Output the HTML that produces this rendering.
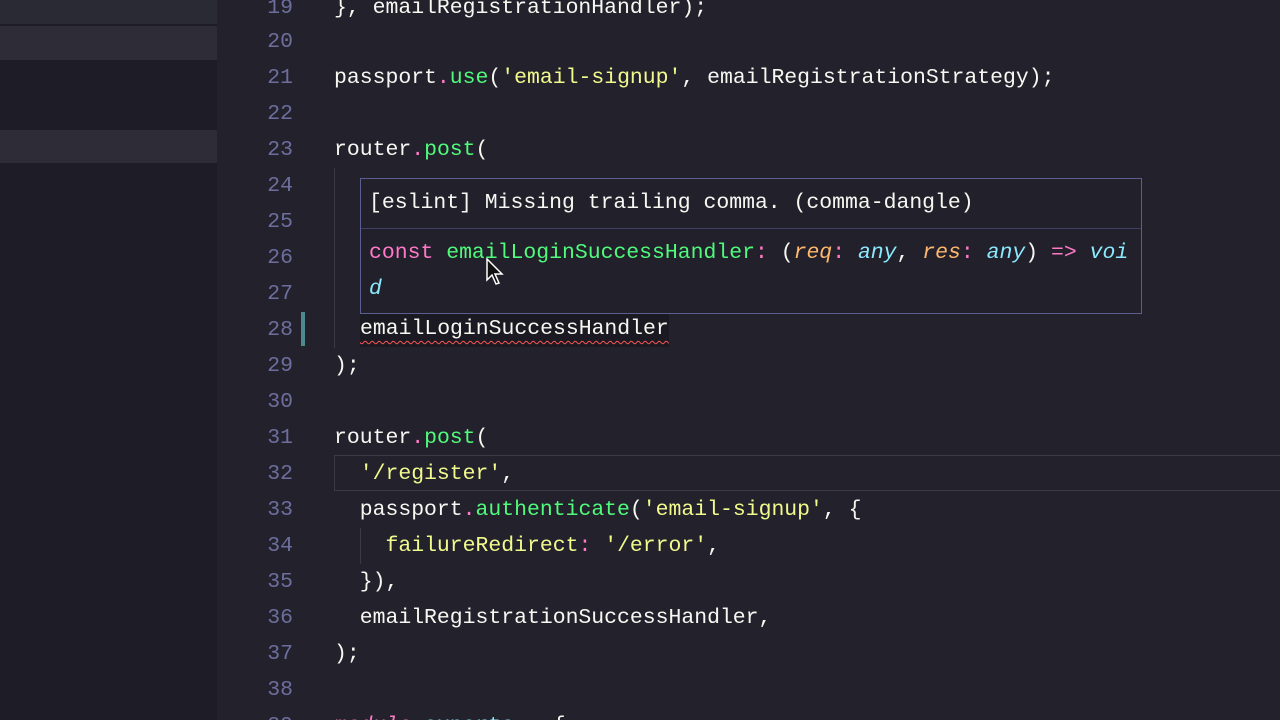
<!DOCTYPE html><html style="overflow:hidden"><head><style>
html,body{width:1280px;height:720px;overflow:hidden}
body{margin:0;background:#22212c;font-family:"Liberation Mono","DejaVu Sans Mono",monospace;font-size:21.45px;color:#f8f8f2;position:relative}
.sb{position:absolute;left:0;top:0;width:217px;height:720px;background:#1e1d27}
.hl{position:absolute;left:0;width:217px;background:#2d2c37}
.ln{position:absolute;left:230px;width:63px;text-align:right;color:#6c6f9e;line-height:36px;height:36px}
.c{position:absolute;left:334px;line-height:36px;height:36px;white-space:pre}
.s{color:#f1fa8c}.f{color:#50fa7b}.k{color:#ff79c6}.y{color:#8be9fd}.o{color:#ffb86c;font-style:italic}.i{font-style:italic}
.tip{position:absolute;left:360px;top:178px;width:780px;height:134px;background:#21202b;border:1px solid #5a5f90}
.tl{position:absolute;left:8px;white-space:pre;line-height:36px}
</style></head><body>
<div class="sb"></div>
<div class="hl" style="top:0;height:24px;background:#2a2a34"></div>
<div class="hl" style="top:26px;height:34px"></div>
<div class="hl" style="top:130px;height:33px"></div>
<div style="position:absolute;left:334px;top:455px;width:946px;height:34px;border:1px solid #3a3a48;border-right:none"></div>
<div style="position:absolute;left:334px;top:168px;width:1px;height:180px;background:#3a3a48"></div>
<div style="position:absolute;left:360px;top:528px;width:1px;height:36px;background:#3a3a48"></div>
<div style="position:absolute;left:301px;top:312px;width:4px;height:34px;background:#4d8a8f"></div>
<div class="ln" style="top:-10px">19</div><div class="c" style="top:-10px">}, emailRegistrationHandler);</div>
<div class="ln" style="top:24px">20</div>
<div class="ln" style="top:60px">21</div><div class="c" style="top:60px">passport<span class="k">.</span><span class="f">use</span>(<span class="s">'email-signup'</span>, emailRegistrationStrategy);</div>
<div class="ln" style="top:96px">22</div>
<div class="ln" style="top:132px">23</div><div class="c" style="top:132px">router<span class="k">.</span><span class="f">post</span>(</div>
<div class="ln" style="top:168px">24</div>
<div class="ln" style="top:204px">25</div>
<div class="ln" style="top:240px">26</div>
<div class="ln" style="top:276px">27</div>
<div class="ln" style="top:312px">28</div><div class="c" style="top:311px;left:360px;background:#1b1a23;text-decoration:underline wavy #ff5555;text-underline-offset:6px;text-decoration-thickness:1px">emailLoginSuccessHandler</div>
<div class="ln" style="top:348px">29</div><div class="c" style="top:348px">);</div>
<div class="ln" style="top:384px">30</div>
<div class="ln" style="top:420px">31</div><div class="c" style="top:420px">router<span class="k">.</span><span class="f">post</span>(</div>
<div class="ln" style="top:456px">32</div><div class="c" style="top:456px">  <span class="s">'/register'</span>,</div>
<div class="ln" style="top:492px">33</div><div class="c" style="top:492px">  passport<span class="k">.</span><span class="f">authenticate</span>(<span class="s">'email-signup'</span>, {</div>
<div class="ln" style="top:528px">34</div><div class="c" style="top:528px">    <span class="s">failureRedirect</span><span class="k">:</span> <span class="s">'/error'</span>,</div>
<div class="ln" style="top:564px">35</div><div class="c" style="top:564px">  }),</div>
<div class="ln" style="top:600px">36</div><div class="c" style="top:600px">  emailRegistrationSuccessHandler,</div>
<div class="ln" style="top:636px">37</div><div class="c" style="top:636px">);</div>
<div class="ln" style="top:672px">38</div>
<div class="ln" style="top:708px">39</div><div class="c" style="top:708px"><span class="k i">module</span><span class="k">.</span><span class="y">exports</span> <span class="k">=</span> {</div>
<div class="tip">
<div class="tl" style="top:6px">[eslint] Missing trailing comma. (comma-dangle)</div>
<div style="position:absolute;left:0;right:0;top:49px;height:1px;background:#3f4060"></div>
<div class="tl" style="top:56px"><span class="k">const</span> <span class="f">emailLoginSuccessHandler</span><span class="k">:</span> (<span class="o">req</span><span class="k">:</span> <span class="y i">any</span>, <span class="o">res</span><span class="k">:</span> <span class="y i">any</span>) <span class="k">=&gt;</span> <span class="y i">voi</span></div>
<div class="tl" style="top:92px"><span class="y i">d</span></div>
</div>
<svg style="position:absolute;left:486px;top:258px" width="18" height="28" viewBox="0 0 18 28"><path d="M1 1 L1 22 L6 17 L10 26 L13 25 L9 16 L16 16 Z" fill="#111" stroke="#fff" stroke-width="1.5"/></svg>
</body></html>
